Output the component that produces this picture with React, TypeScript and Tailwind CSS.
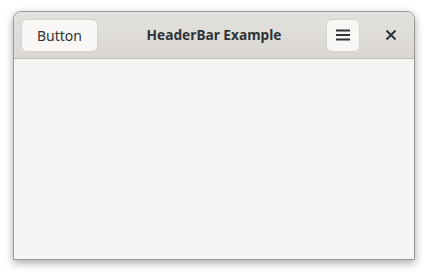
export default function App() {
  return (
    <div className="w-[428px] h-[276px] bg-white pl-[13px] pt-[11px]" style={{ fontFamily: '"Noto Sans", "DejaVu Sans", sans-serif' }}>
      <div className="w-[402px] h-[249px] flex flex-col border border-[#9c9a98] rounded-t-[8px] overflow-hidden bg-[#f6f5f4] shadow-[0_3px_8px_rgba(0,0,0,0.35)]">
        <div className="h-[47px] shrink-0 grid grid-cols-[1fr_auto_1fr] items-center px-[7px] bg-gradient-to-b from-[#e3e1de] to-[#dad7d3] border-b border-[#c0bdb9]">
          <div className="flex">
            <button className="w-[77px] h-[33px] rounded-[6px] bg-[#f8f7f6] border border-[#d6d3cf] text-[14px] text-[#2e3436] flex items-center justify-center">
              Button
            </button>
          </div>
          <div className="text-[13.7px] font-bold text-[#2e3436]">HeaderBar Example</div>
          <div className="flex items-center justify-end gap-[16px]">
            <button className="w-[34px] h-[33px] rounded-[6px] bg-[#f8f7f6] border border-[#d6d3cf] flex items-center justify-center">
              <svg width="16" height="16" viewBox="0 0 16 16">
                <rect x="1" y="2.5" width="14" height="2" fill="#2e3436" />
                <rect x="1" y="7" width="14" height="2" fill="#2e3436" />
                <rect x="1" y="11.5" width="14" height="2" fill="#2e3436" />
              </svg>
            </button>
            <button className="w-[30px] h-[30px] mr-[1px] flex items-center justify-center">
              <svg width="10" height="10" viewBox="0 0 10 10">
                <path d="M1.2 1.2 L8.8 8.8 M8.8 1.2 L1.2 8.8" stroke="#2e3436" strokeWidth="2" strokeLinecap="square" />
              </svg>
            </button>
          </div>
        </div>
        <div className="flex-1" />
      </div>
    </div>
  );
}
